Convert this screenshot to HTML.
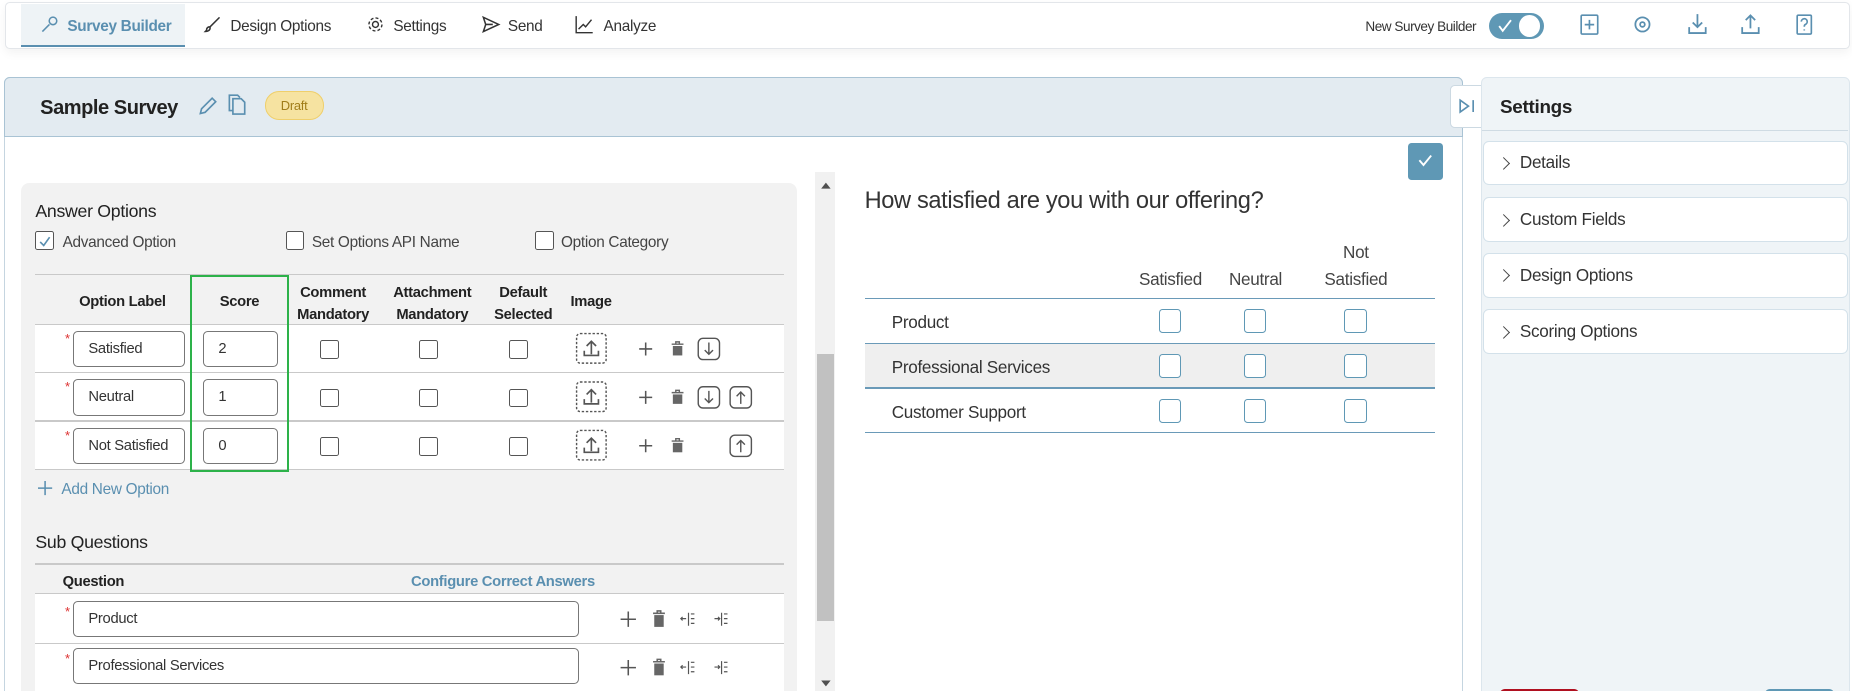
<!DOCTYPE html>
<html><head><meta charset="utf-8">
<style>
html{zoom:1.18112;overflow:hidden}
body{margin:0;background:#fff;font-family:"Liberation Sans",sans-serif;color:#333;letter-spacing:-0.25px}
#w{position:relative;width:1568px;height:585px;overflow:hidden}
.a{position:absolute}
.t{position:absolute;white-space:nowrap;margin-top:2px}
svg{position:absolute;overflow:visible}
.cb{position:absolute;width:14px;height:14px;border:1px solid #555;border-radius:2px;background:#fff}
.in{position:absolute;border:1px solid #777;border-radius:4px;background:#fff;font-size:12.5px;box-sizing:border-box;padding-left:12px;line-height:30px;overflow:hidden;white-space:nowrap}
.mc{position:absolute;width:19px;height:20px;border:1px solid #5f98b5;border-radius:3px;background:#fff;box-sizing:border-box}
.acc{position:absolute;left:1256px;width:309px;height:38px;background:#fff;border:1px solid #d3e1ea;border-radius:5px;box-sizing:border-box}
.acc span{position:absolute;left:30px;top:10px;font-size:14.5px;color:#333}
.acc i{position:absolute;left:12px;top:15px;width:7px;height:7px;border-right:1.5px solid #444;border-top:1.5px solid #444;transform:rotate(45deg)}
.hl{position:absolute;height:1px;background:#c9c9c9}
.req{position:absolute;color:#d33;font-size:11px}
</style></head><body><div id="w">
<!-- top nav -->
<div class="a" style="left:4px;top:2px;width:1561px;height:38px;border:1px solid #e3e6ea;border-radius:4px;background:#fff;box-shadow:0 3px 8px rgba(0,0,0,.05)"></div>
<div class="a" style="left:18px;top:3px;width:139px;height:35px;background:#eef3f6;border-bottom:2px solid #5a8fb0"></div>
<svg style="left:34px;top:13px" width="16" height="16" viewBox="0 0 16 16" fill="none" stroke="#5a8fb0" stroke-width="1.3"><path d="M2 14l6-6"/><circle cx="11" cy="5" r="3.2"/></svg>
<div class="t" style="left:57px;top:13px;font-size:13px;font-weight:bold;color:#5a8fb0">Survey Builder</div>
<svg style="left:172px;top:13px" width="16" height="16" viewBox="0 0 16 16" fill="none" stroke="#333" stroke-width="1.3"><path d="M14 2L6 10M6 10c-2 0-3 1-3 3l-1 1c2 0 4-1 4-3z"/></svg>
<div class="t" style="left:195px;top:13px;font-size:13px">Design Options</div>
<svg style="left:310px;top:13px" width="16" height="16" viewBox="0 0 16 16" fill="none" stroke="#333" stroke-width="1.2"><circle cx="8" cy="8" r="2.5"/><circle cx="8" cy="8" r="5.5" stroke-dasharray="2.5 1.8"/></svg>
<div class="t" style="left:333px;top:13px;font-size:13px">Settings</div>
<svg style="left:407px;top:13px" width="16" height="16" viewBox="0 0 16 16" fill="none" stroke="#333" stroke-width="1.3"><path d="M2 2l13 6-13 6 2-6zM4 8h6"/></svg>
<div class="t" style="left:430px;top:13px;font-size:13px">Send</div>
<svg style="left:487px;top:13px" width="16" height="16" viewBox="0 0 16 16" fill="none" stroke="#333" stroke-width="1.2"><path d="M1 1v14h14M3 12l4-4 2 2 5-6"/></svg>
<div class="t" style="left:511px;top:13px;font-size:13px">Analyze</div>
<div class="t" style="left:1156px;top:14px;font-size:11.5px;letter-spacing:-0.4px">New Survey Builder</div>
<div class="a" style="left:1261px;top:11px;width:46px;height:22px;border-radius:11px;background:#5f98b5"></div>
<div class="a" style="left:1286px;top:13px;width:18px;height:18px;border-radius:9px;background:#fff"></div>
<svg style="left:1268px;top:16px" width="12" height="12" viewBox="0 0 12 12" fill="none" stroke="#fff" stroke-width="1.6"><path d="M1 6l3 4 7-9"/></svg>
<svg style="left:1338px;top:12px" width="16" height="18" viewBox="0 0 16 18" fill="none" stroke="#5a8fb0" stroke-width="1.4"><rect x="1" y="1" width="14" height="16" rx="1"/><path d="M8 5v8M4 9h8"/></svg>
<svg style="left:1383px;top:13px" width="16" height="16" viewBox="0 0 16 16" fill="none" stroke="#5a8fb0" stroke-width="1.5"><circle cx="8" cy="8" r="6"/><circle cx="8" cy="8" r="2"/></svg>
<svg style="left:1429px;top:11px" width="16" height="18" viewBox="0 0 16 18" fill="none" stroke="#5a8fb0" stroke-width="1.5"><path d="M8 1v11M4 8l4 4 4-4M1 12v5h14v-5"/></svg>
<svg style="left:1474px;top:11px" width="16" height="18" viewBox="0 0 16 18" fill="none" stroke="#5a8fb0" stroke-width="1.5"><path d="M8 13V2M4 6l4-4 4 4M1 12v5h14v-5"/></svg>
<svg style="left:1521px;top:12px" width="14" height="18" viewBox="0 0 14 18" fill="none" stroke="#5a8fb0" stroke-width="1.4"><rect x="1" y="1" width="12" height="16" rx="1"/><path d="M4.5 6.5a2.5 2.5 0 1 1 3.5 2.3c-1 .5-1 1-1 2M7 13v1"/></svg>

<!-- main panel -->
<div class="a" style="left:3px;top:65px;width:1234px;height:700px;border:1px solid #c5d5e0;border-radius:5px;background:#fff"></div>
<div class="a" style="left:3px;top:65px;width:1234px;height:49px;background:#e3ebf1;border:1px solid #a9c3d4;border-radius:5px 5px 0 0"></div>
<div class="t" style="left:34px;top:80px;font-size:17px;font-weight:bold;color:#222;letter-spacing:-0.4px">Sample Survey</div>
<svg style="left:168px;top:82px" width="16" height="16" viewBox="0 0 16 16" fill="none" stroke="#5a8fb0" stroke-width="1.4"><path d="M12 1l3 3-9 9-4 1 1-4z"/></svg>
<svg style="left:192px;top:80px" width="17" height="19" viewBox="0 0 17 19" fill="none" stroke="#5a8fb0" stroke-width="1.4"><path d="M5 4h7l3 3v10H5z M5 14H2V1h7l2 2"/></svg>
<div class="a" style="left:224px;top:77px;width:50px;height:25px;background:#f6e3a1;border:1px solid #efcf6b;border-radius:12px;box-sizing:border-box;font-size:11px;color:#a07d1a;text-align:center;line-height:24px">Draft</div>
<div class="a" style="left:1228px;top:72px;width:27px;height:36px;background:#fff;border:1px solid #ccd9e2;border-radius:4px 0 0 4px;box-sizing:border-box"></div>
<svg style="left:1235px;top:84px" width="14" height="12" viewBox="0 0 14 12" fill="none" stroke="#5a8fb0" stroke-width="1.4"><path d="M1 1l7 5-7 5zM12 1v10"/></svg>

<!-- save btn -->
<div class="a" style="left:1192px;top:121px;width:30px;height:31px;background:#5f98b5;border-radius:3px"></div>
<svg style="left:1200px;top:129px" width="14" height="14" viewBox="0 0 14 14" fill="none" stroke="#fff" stroke-width="1.6"><path d="M2 7l3.5 4L12 3"/></svg>

<!-- editor -->
<div class="a" style="left:18px;top:155px;width:657px;height:600px;background:#f2f2f2;border-radius:7px"></div>
<div class="t" style="left:30px;top:168px;font-size:15px;color:#222">Answer Options</div>
<div class="cb" style="left:30px;top:196px"></div>
<svg style="left:33px;top:200px" width="10" height="9" viewBox="0 0 10 9" fill="none" stroke="#5a8fb0" stroke-width="1.4"><path d="M1 5l3 3 5-7"/></svg>
<div class="t" style="left:53px;top:196px;font-size:13px;color:#444">Advanced Option</div>
<div class="cb" style="left:242px;top:196px"></div>
<div class="t" style="left:264px;top:196px;font-size:13px;color:#444">Set Options API Name</div>
<div class="cb" style="left:453px;top:196px"></div>
<div class="t" style="left:475px;top:196px;font-size:13px;color:#444">Option Category</div>

<div class="a" style="left:30px;top:275px;width:634px;height:123px;background:#fff"></div>
<div class="hl" style="left:30px;top:232px;width:634px"></div>
<div class="hl" style="left:30px;top:274px;width:634px"></div>
<div class="hl" style="left:30px;top:315px;width:634px"></div>
<div class="hl" style="left:30px;top:356px;width:634px"></div>
<div class="hl" style="left:30px;top:397px;width:634px"></div>
<div class="t" style="left:67px;top:247px;font-size:12.5px;font-weight:bold;color:#222">Option Label</div>
<div class="t" style="left:186px;top:247px;font-size:12.5px;font-weight:bold;color:#222">Score</div>
<div class="t" style="left:246px;top:238px;font-size:12.5px;font-weight:bold;color:#222;text-align:center;line-height:18px;width:72px">Comment<br>Mandatory</div>
<div class="t" style="left:328px;top:238px;font-size:12.5px;font-weight:bold;color:#222;text-align:center;line-height:18px;width:76px">Attachment<br>Mandatory</div>
<div class="t" style="left:412px;top:238px;font-size:12.5px;font-weight:bold;color:#222;text-align:center;line-height:18px;width:62px">Default<br>Selected</div>
<div class="t" style="left:483px;top:247px;font-size:12.5px;font-weight:bold;color:#222">Image</div>

<!-- rows -->
<div class="req" style="left:55px;top:280px">*</div>
<div class="in" style="left:62px;top:280px;width:95px;height:31px">Satisfied</div>
<div class="in" style="left:172px;top:280px;width:63px;height:31px">2</div>
<div class="req" style="left:55px;top:321px">*</div>
<div class="in" style="left:62px;top:321px;width:95px;height:31px">Neutral</div>
<div class="in" style="left:172px;top:321px;width:63px;height:31px">1</div>
<div class="req" style="left:55px;top:362px">*</div>
<div class="in" style="left:62px;top:362px;width:95px;height:31px">Not Satisfied</div>
<div class="in" style="left:172px;top:362px;width:63px;height:31px">0</div>

<div class="cb" style="left:271px;top:288px"></div><div class="cb" style="left:355px;top:288px"></div><div class="cb" style="left:431px;top:288px"></div>
<div class="cb" style="left:271px;top:329px"></div><div class="cb" style="left:355px;top:329px"></div><div class="cb" style="left:431px;top:329px"></div>
<div class="cb" style="left:271px;top:370px"></div><div class="cb" style="left:355px;top:370px"></div><div class="cb" style="left:431px;top:370px"></div>

<svg style="left:488px;top:282px" width="170" height="110" viewBox="0 0 170 110" fill="none" stroke="#555" stroke-width="1.2">
<g><rect x="0.5" y="0.5" width="25" height="25" rx="3" stroke-dasharray="2 1.5"/><path d="M13 18V7M9 11l4-4 4 4M7 15v4h12v-4" stroke-width="1.4"/>
<path d="M59 8v11M53.5 13.5h11" stroke-width="1.3"/><path d="M81 9.5h10M84.5 9V7.5h3V9" stroke="#666"/><rect x="82" y="11" width="8" height="8" fill="#666" stroke="none"/></g>
<g transform="translate(0,41)"><rect x="0.5" y="0.5" width="25" height="25" rx="3" stroke-dasharray="2 1.5"/><path d="M13 18V7M9 11l4-4 4 4M7 15v4h12v-4" stroke-width="1.4"/><path d="M59 8v11M53.5 13.5h11" stroke-width="1.3"/><path d="M81 9.5h10M84.5 9V7.5h3V9" stroke="#666"/><rect x="82" y="11" width="8" height="8" fill="#666" stroke="none"/></g>
<g transform="translate(0,82)"><rect x="0.5" y="0.5" width="25" height="25" rx="3" stroke-dasharray="2 1.5"/><path d="M13 18V7M9 11l4-4 4 4M7 15v4h12v-4" stroke-width="1.4"/><path d="M59 8v11M53.5 13.5h11" stroke-width="1.3"/><path d="M81 9.5h10M84.5 9V7.5h3V9" stroke="#666"/><rect x="82" y="11" width="8" height="8" fill="#666" stroke="none"/></g>
<rect x="103.5" y="4.5" width="18" height="18" rx="4"/><path d="M112.5 8v10M109 14.5l3.5 3.5 3.5-3.5"/>
<rect x="103.5" y="45.5" width="18" height="18" rx="4"/><path d="M112.5 49v10M109 55.5l3.5 3.5 3.5-3.5"/>
<rect x="130.5" y="45.5" width="18" height="18" rx="4"/><path d="M139.5 60V50M136 53.5l3.5-3.5 3.5 3.5"/>
<rect x="130.5" y="86.5" width="18" height="18" rx="4"/><path d="M139.5 101V91M136 94.5l3.5-3.5 3.5 3.5"/>
</svg>

<div class="a" style="left:161px;top:233px;width:80px;height:163px;border:2px solid #2db24a"></div>

<svg style="left:32px;top:407px" width="12" height="12" viewBox="0 0 12 12" stroke="#5a8fb0" stroke-width="1.3"><path d="M6 0v12M0 6h12"/></svg>
<div class="t" style="left:52px;top:405px;font-size:13px;color:#5a8fb0">Add New Option</div>

<div class="t" style="left:30px;top:448px;font-size:15px;color:#222">Sub Questions</div>
<div class="hl" style="left:30px;top:477px;width:634px"></div>
<div class="t" style="left:53px;top:484px;font-size:12.5px;font-weight:bold;color:#222">Question</div>
<div class="t" style="left:348px;top:484px;font-size:12.5px;font-weight:bold;color:#5a8fb0">Configure Correct Answers</div>
<div class="a" style="left:30px;top:503px;width:634px;height:100px;background:#fff"></div>
<div class="hl" style="left:30px;top:502px;width:634px"></div>
<div class="hl" style="left:30px;top:544px;width:634px"></div>
<div class="hl" style="left:30px;top:585px;width:634px"></div>
<div class="req" style="left:55px;top:511px">*</div>
<div class="in" style="left:62px;top:509px;width:428px;height:30px">Product</div>
<div class="req" style="left:55px;top:551px">*</div>
<div class="in" style="left:62px;top:549px;width:428px;height:30px">Professional Services</div>
<svg style="left:525px;top:515px" width="100" height="60" viewBox="0 0 100 60" fill="none" stroke="#555" stroke-width="1.3">
<g><path d="M7 3v13M0.5 9.5h13"/><path d="M28 4.5h10M31.5 4V2.5h3V4" stroke="#666"/><rect x="29" y="6" width="8" height="10" fill="#666" stroke="none"/>
<path d="M56 9h-4M53 7.5l-1.5 1.5 1.5 1.5M58 4v11M60 5h3M60 9h3M60 13h3" stroke-width="1"/>
<path d="M80 9h4M83 7.5l1.5 1.5-1.5 1.5M86 4v11M88 5h3M88 9h3M88 13h3" stroke-width="1"/></g>
<g transform="translate(0,41)"><path d="M7 3v13M0.5 9.5h13"/><path d="M28 4.5h10M31.5 4V2.5h3V4" stroke="#666"/><rect x="29" y="6" width="8" height="10" fill="#666" stroke="none"/>
<path d="M56 9h-4M53 7.5l-1.5 1.5 1.5 1.5M58 4v11M60 5h3M60 9h3M60 13h3" stroke-width="1"/>
<path d="M80 9h4M83 7.5l1.5 1.5-1.5 1.5M86 4v11M88 5h3M88 9h3M88 13h3" stroke-width="1"/></g>
</svg>

<!-- scrollbar -->
<div class="a" style="left:690px;top:146px;width:17px;height:460px;background:#f1f1f1"></div>
<div class="a" style="left:692px;top:300px;width:14px;height:226px;background:#c1c1c1"></div>
<svg style="left:694px;top:152px" width="10" height="432" viewBox="0 0 10 432" fill="#505050"><path d="M1 7l4-5 4 5z M1 424l4 5 4-5z"/></svg>

<!-- preview -->
<div class="t" style="left:732px;top:157px;font-size:20px;color:#333;letter-spacing:-0.3px">How satisfied are you with our offering?</div>
<div class="t" style="left:1118px;top:204px;width:60px;text-align:center;font-size:14.5px;color:#444">Not</div>
<div class="t" style="left:956px;top:227px;width:70px;text-align:center;font-size:14.5px;color:#444">Satisfied</div>
<div class="t" style="left:1033px;top:227px;width:60px;text-align:center;font-size:14.5px;color:#444">Neutral</div>
<div class="t" style="left:1113px;top:227px;width:70px;text-align:center;font-size:14.5px;color:#444">Satisfied</div>
<div class="a" style="left:732px;top:291px;width:483px;height:37px;background:#efefef"></div>
<div class="a" style="left:732px;top:252px;width:483px;height:1px;background:#6a9ab8"></div>
<div class="a" style="left:732px;top:290px;width:483px;height:1px;background:#6a9ab8"></div>
<div class="a" style="left:732px;top:328px;width:483px;height:1px;background:#6a9ab8"></div>
<div class="a" style="left:732px;top:366px;width:483px;height:1px;background:#6a9ab8"></div>
<div class="t" style="left:755px;top:263px;font-size:14.5px;color:#333">Product</div>
<div class="t" style="left:755px;top:301px;font-size:14.5px;color:#333">Professional Services</div>
<div class="t" style="left:755px;top:339px;font-size:14.5px;color:#333">Customer Support</div>
<div class="mc" style="left:981px;top:262px"></div><div class="mc" style="left:1053px;top:262px"></div><div class="mc" style="left:1138px;top:262px"></div>
<div class="mc" style="left:981px;top:300px"></div><div class="mc" style="left:1053px;top:300px"></div><div class="mc" style="left:1138px;top:300px"></div>
<div class="mc" style="left:981px;top:338px"></div><div class="mc" style="left:1053px;top:338px"></div><div class="mc" style="left:1138px;top:338px"></div>

<!-- settings panel -->
<div class="a" style="left:1254px;top:65px;width:312px;height:700px;background:#eff4f7;border:1px solid #dce6ed;border-radius:5px;box-sizing:border-box"></div>
<div class="a" style="left:1255px;top:110px;width:310px;height:1px;background:#cfdbe3"></div>
<div class="t" style="left:1270px;top:80px;font-size:16px;font-weight:bold;color:#222">Settings</div>
<div class="acc" style="top:119px"><i></i><span>Details</span></div>
<div class="acc" style="top:167px"><i></i><span>Custom Fields</span></div>
<div class="acc" style="top:214px"><i></i><span>Design Options</span></div>
<div class="acc" style="top:262px"><i></i><span>Scoring Options</span></div>
<div class="a" style="left:1270px;top:583px;width:67px;height:12px;background:#b01020;border-radius:4px"></div>
<div class="a" style="left:1494px;top:583px;width:59px;height:12px;background:#5f98b5;border-radius:4px"></div>
</div></body></html>
